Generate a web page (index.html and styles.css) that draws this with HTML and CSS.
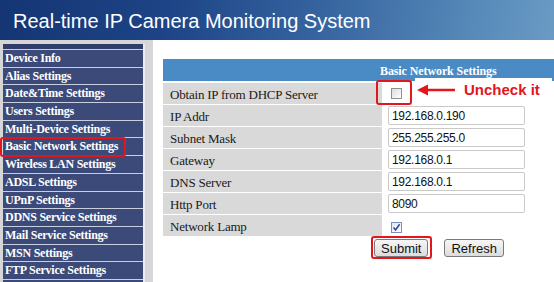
FILE: index.html
```html
<!DOCTYPE html>
<html>
<head>
<meta charset="utf-8">
<link rel="stylesheet" href="styles.css">
</head>
<body>
<header class="header">
  <h1 class="title">Real-time IP Camera Monitoring System</h1>
</header>
<div class="main">
  <aside class="side">
    <nav class="nav">
      <div class="nav-top"></div>
      <a class="nav-item">Device Info</a>
      <a class="nav-item">Alias Settings</a>
      <a class="nav-item">Date&amp;Time Settings</a>
      <a class="nav-item">Users Settings</a>
      <a class="nav-item">Multi-Device Settings</a>
      <a class="nav-item marked">Basic Network Settings</a>
      <a class="nav-item">Wireless LAN Settings</a>
      <a class="nav-item">ADSL Settings</a>
      <a class="nav-item">UPnP Settings</a>
      <a class="nav-item">DDNS Service Settings</a>
      <a class="nav-item">Mail Service Settings</a>
      <a class="nav-item">MSN Settings</a>
      <a class="nav-item">FTP Service Settings</a>
    </nav>
  </aside>
  <section class="content">
    <div class="panel">
      <div class="panel-head">Basic Network Settings</div>
      <div class="row">
        <div class="label">Obtain IP from DHCP Server</div>
        <div class="value">
          <span class="check-wrap">
            <span class="checkbox"></span>
          </span>
          <span class="note">
            <svg class="arrow" width="40" height="14" viewBox="0 0 40 14">
              <line x1="38" y1="7" x2="8" y2="7" stroke="#e3161c" stroke-width="2.5"/>
              <polygon points="0,7 11,1.5 11,12.5" fill="#e3161c"/>
            </svg>
            <span class="note-text">Uncheck it</span>
          </span>
        </div>
      </div>
      <div class="row">
        <div class="label">IP Addr</div>
        <div class="value"><input class="field" value="192.168.0.190"></div>
      </div>
      <div class="row">
        <div class="label">Subnet Mask</div>
        <div class="value"><input class="field" value="255.255.255.0"></div>
      </div>
      <div class="row">
        <div class="label">Gateway</div>
        <div class="value"><input class="field" value="192.168.0.1"></div>
      </div>
      <div class="row">
        <div class="label">DNS Server</div>
        <div class="value"><input class="field" value="192.168.0.1"></div>
      </div>
      <div class="row">
        <div class="label">Http Port</div>
        <div class="value"><input class="field" value="8090"></div>
      </div>
      <div class="row">
        <div class="label">Network Lamp</div>
        <div class="value">
          <span class="checkbox checked">
            <svg width="9" height="9" viewBox="0 0 9 9"><path d="M1.5 4.5 L3.6 7 L7.6 1.2" fill="none" stroke="#2a4aa8" stroke-width="1.6"/></svg>
          </span>
        </div>
      </div>
      <div class="actions">
        <span class="btn-wrap marked-btn"><button class="btn">Submit</button></span>
        <button class="btn">Refresh</button>
      </div>
    </div>
  </section>
</div>
</body>
</html>
```
FILE: styles.css
```css
html, body {
  margin: 0;
  padding: 0;
  background: #ffffff;
  height: 100%;
  overflow: hidden;
}
body {
  font-family: "Liberation Serif", "Times New Roman", serif;
}
.header {
  height: 40px;
  background: linear-gradient(100deg, #153574 0%, #1d4486 30%, #3867a1 60%, #5789b9 85%, #6a9bc5 100%);
  display: flex;
  align-items: center;
  padding-left: 13px;
}
.title {
  margin: 2px 0 0 0;
  font-family: "Liberation Sans", Arial, sans-serif;
  font-weight: normal;
  font-size: 20px;
  color: #ffffff;
}
.main {
  display: flex;
  height: 242px;
  overflow: hidden;
}
.side {
  width: 153px;
  flex: none;
  box-sizing: border-box;
  background: #d6d6d6;
  padding: 4px 8px 0 3px;
  overflow: hidden;
}
.nav {
  border-right: 2px solid #e8ebf2;
  background: #3b4a78;
  height: 100%;
}
.nav-top {
  height: 5px;
  background: #2f3d68;
  border-bottom: 1px solid #c9cfdf;
}
.nav-item {
  display: block;
  height: 16.7px;
  line-height: 17px;
  border-bottom: 1px solid #c9cfdf;
  color: #ffffff;
  font-weight: bold;
  font-size: 12px;
  letter-spacing: -0.25px;
  padding-left: 2px;
  white-space: nowrap;
  position: relative;
}
.marked::after {
  content: "";
  position: absolute;
  left: -3px;
  top: -1px;
  width: 122px;
  height: 16px;
  border: 2.5px solid #e3161c;
  border-radius: 3px;
}
.content {
  flex: 1;
  padding: 19px 0 0 10px;
}
.panel {
  width: 391px;
}
.panel-head {
  height: 22px;
  line-height: 25px;
  background: #4a8bc5;
  color: #ffffff;
  font-weight: bold;
  font-size: 12px;
  letter-spacing: -0.1px;
  padding-left: 217px;
  margin-bottom: 2px;
}
.row {
  display: flex;
  height: 21px;
  margin-bottom: 1px;
}
.label {
  width: 212px;
  flex: none;
  background: #d9d9d9;
  padding-left: 7px;
  font-size: 13px;
  letter-spacing: -0.2px;
  line-height: 23px;
  color: #1a1a1a;
  white-space: nowrap;
}
.value {
  flex: 1;
  display: flex;
  align-items: center;
  padding-left: 6px;
  position: relative;
}
.field {
  box-sizing: border-box;
  width: 137px;
  height: 19px;
  border: 1px solid #c9c9c9;
  border-radius: 2px;
  padding: 0 3px;
  font-family: "Liberation Sans", Arial, sans-serif;
  font-size: 12px;
  letter-spacing: -0.3px;
  color: #111;
  background: #fff;
  outline: none;
}
.check-wrap {
  position: relative;
  display: inline-flex;
}
.check-wrap::after {
  content: "";
  position: absolute;
  left: -12px;
  top: -8px;
  width: 32px;
  height: 21px;
  border: 2.5px solid #e3161c;
  border-radius: 3px;
}
.checkbox {
  box-sizing: border-box;
  width: 11px;
  height: 11px;
  margin-left: 3px;
  border: 1px solid #8f8f8f;
  background: linear-gradient(135deg, #dcdcdc, #ffffff);
  display: inline-flex;
  align-items: center;
  justify-content: center;
}
.checkbox.checked {
  margin-top: 3px;
  border-color: #7b8eb8;
  background: linear-gradient(135deg, #dfe6f4, #ffffff);
}
.note {
  position: absolute;
  left: 33px;
  top: -5px;
  display: flex;
  align-items: center;
  background: #ffffff;
  padding: 2px 12px 2px 2px;
  white-space: nowrap;
}
.arrow {
  display: block;
  margin-right: 7px;
}
.note-text {
  font-family: "Liberation Sans", Arial, sans-serif;
  font-weight: bold;
  font-size: 15px;
  color: #e3161c;
  line-height: 20px;
}
.actions {
  display: flex;
  align-items: center;
  padding-left: 211px;
  margin-top: 3px;
  gap: 16px;
}
.btn-wrap {
  position: relative;
  display: inline-flex;
}
.marked-btn::after {
  content: "";
  position: absolute;
  left: -3px;
  top: -3px;
  width: 57px;
  height: 19px;
  border: 2.5px solid #e3161c;
  border-radius: 3px;
}
.btn {
  height: 18px;
  padding: 0 6px;
  font-family: "Liberation Sans", Arial, sans-serif;
  font-size: 13px;
  color: #111;
  border: 1px solid #7a7a7a;
  border-radius: 3px;
  background: linear-gradient(#f6f6f6, #dcdcdc);
  line-height: 15px;
}
```
